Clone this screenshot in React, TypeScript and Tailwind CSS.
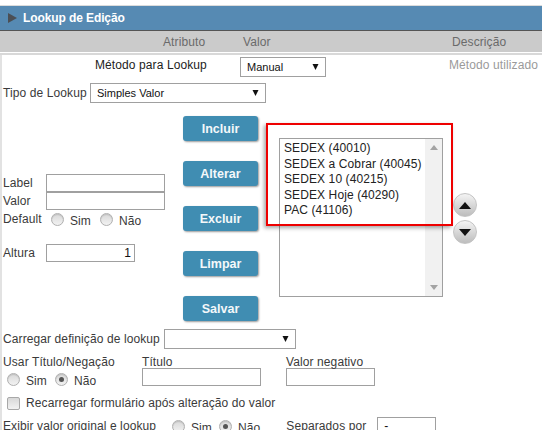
import { ReactNode } from 'react';

const BOX = 'border border-[#a0a0a0] bg-white';

function Arrow() {
    return (
        <svg width="7" height="8" viewBox="0 0 7 8" className="shrink-0">
            <path d="M0.5 1H6.5L3.5 7Z" fill="#111" />
        </svg>
    );
}

function Select({ value, className }: { value?: string; className: string }) {
    return (
        <div className={`${BOX} flex items-center justify-between pl-[6px] pr-[6px] text-[11px] tracking-normal text-[#111] ${className}`}>
            <span>{value}</span>
            <Arrow />
        </div>
    );
}

function Radio({ checked = false }: { checked?: boolean }) {
    return (
        <span className="flex h-[13px] w-[13px] shrink-0 items-center justify-center rounded-full border border-[#b0b0b0] bg-gradient-to-b from-[#d8d8d8] to-[#f2f2f2] shadow-[inset_0_1px_1px_rgba(0,0,0,0.12)]">
            {checked && <span className="h-[5px] w-[5px] rounded-full bg-[#555]" />}
        </span>
    );
}

function RadioLabel({ label, checked }: { label: string; checked?: boolean }) {
    return (
        <span className="flex items-center gap-[6px]">
            <Radio checked={checked} />
            <span className="translate-y-[2px]">{label}</span>
        </span>
    );
}

function ActionButton({ children, className = '' }: { children: ReactNode; className?: string }) {
    return (
        <button
            type="button"
            className={`h-[25px] w-[75px] rounded-[3px] bg-[#408db2] text-[12.5px] font-bold tracking-normal text-[#f4f8fa] shadow-[1px_1px_2px_rgba(0,0,0,0.4)] ${className}`}
        >
            {children}
        </button>
    );
}

function RoundButton({ up = false }: { up?: boolean }) {
    return (
        <button
            type="button"
            className="flex h-[24px] w-[24px] items-center justify-center rounded-full border border-[#c4c4c4] bg-gradient-to-b from-[#f4f4f4] to-[#bdbdbd]"
        >
            <svg width="12" height="7" viewBox="0 0 12 7">
                <path d={up ? 'M0 7H12L6 0Z' : 'M0 0H12L6 7Z'} fill="#111" />
            </svg>
        </button>
    );
}

const ITEMS = ['SEDEX (40010)', 'SEDEX a Cobrar (40045)', 'SEDEX 10 (40215)', 'SEDEX Hoje (40290)', 'PAC (41106)'];

export default function App() {
    return (
        <div className="relative h-[430px] w-[542px] overflow-hidden whitespace-nowrap bg-white font-['Liberation_Sans',Arial,sans-serif] text-[12px] leading-[14px] tracking-[0.1px] text-[#3a3a3a]">
            <div className="pt-[5px]">
                <div className="h-px bg-[#dcdcdc]" />
                <div className="flex h-[24px] items-center bg-[#568ab3] pl-[8px]">
                    <svg width="9" height="10" viewBox="0 0 9 10">
                        <path d="M0 0L9 5L0 10Z" fill="#4b4f55" />
                    </svg>
                    <span className="ml-[6px] font-bold tracking-[-0.1px] text-white">Lookup de Edição</span>
                </div>
                <div className="h-px bg-[#555]" />
                <div className="flex h-[21px] items-center bg-[#cbcbcb] text-[#6a6a6a]">
                    <span className="ml-[163px] w-[80px]">Atributo</span>
                    <span className="w-[209px]">Valor</span>
                    <span>Descrição</span>
                </div>
                <div className="mt-px h-[2px] bg-[#d8d8d8]" />
            </div>

            <div className="border-l-2 border-[#e2e2e2] pl-[1px]">
                <div className="flex h-[20px] items-start pt-[2px]">
                    <span className="ml-[92px] w-[145px] pt-px text-[#222]">Método para Lookup</span>
                    <Select value="Manual" className="h-[20px] w-[86px]" />
                    <span className="ml-[123px] pt-px text-[#9a9a9a]">Método utilizado</span>
                </div>

                <div className="mt-[8px] flex h-[20px] items-center">
                    <span className="w-[87px]">Tipo de Lookup</span>
                    <Select value="Simples Valor" className="h-[20px] w-[176px]" />
                </div>

                <div className="mt-[13px] flex h-[205px]">
                    <div className="w-[180px] pt-[58px]">
                        <div className="flex h-[18px] items-center">
                            <span className="w-[43px]">Label</span>
                            <div className={`${BOX} h-[18px] w-[119px]`} />
                        </div>
                        <div className="flex h-[18px] items-center">
                            <span className="w-[43px]">Valor</span>
                            <div className={`${BOX} h-[18px] w-[119px]`} />
                        </div>
                        <div className="flex h-[18px] items-center">
                            <span className="w-[48px]">Default</span>
                            <RadioLabel label="Sim" />
                            <span className="w-[9px]" />
                            <RadioLabel label="Não" />
                        </div>
                        <div className="mt-[16px] flex h-[18px] items-center">
                            <span className="w-[43px]">Altura</span>
                            <div className={`${BOX} flex h-[18px] w-[89px] items-center justify-end pr-[3px] text-[#111]`}>1</div>
                        </div>
                    </div>

                    <div className="flex w-[96px] flex-col gap-[20px]">
                        <ActionButton>Incluir</ActionButton>
                        <ActionButton>Alterar</ActionButton>
                        <ActionButton>Excluir</ActionButton>
                        <ActionButton>Limpar</ActionButton>
                        <ActionButton>Salvar</ActionButton>
                    </div>

                    <div className={`${BOX} mt-[22px] flex h-[159px] w-[164px]`}>
                        <div className="flex-1 pl-[4px] pt-[2px] text-[#222]">
                            {ITEMS.map((item) => (
                                <div key={item} className="h-[15.5px]">{item}</div>
                            ))}
                        </div>
                        <div className="flex w-[17px] flex-col items-center justify-between bg-[#f1f1f1] py-[6px]">
                            <svg width="8" height="5" viewBox="0 0 8 5"><path d="M0 5H8L4 0Z" fill="#a3a3a3" /></svg>
                            <svg width="8" height="5" viewBox="0 0 8 5"><path d="M0 0H8L4 5Z" fill="#a3a3a3" /></svg>
                        </div>
                    </div>

                    <div className="ml-[10px] flex flex-col gap-[3px] pt-[77px]">
                        <RoundButton up />
                        <RoundButton />
                    </div>
                </div>

                <div className="mt-[8px] flex h-[20px] items-center">
                    <span className="w-[161px]">Carregar definição de lookup</span>
                    <Select className="h-[20px] w-[132px]" />
                </div>

                <div className="mt-[5px] flex">
                    <div className="w-[139px]">
                        <div className="h-[14px] pt-px">Usar Título/Negação</div>
                        <div className="mt-[4px] flex items-center gap-[8px] pl-[4px]">
                            <RadioLabel label="Sim" />
                            <RadioLabel label="Não" checked />
                        </div>
                    </div>
                    <div className="w-[144px]">
                        <div className="h-[14px] pt-px">Título</div>
                        <div className={`${BOX} h-[18px] w-[119px]`} />
                    </div>
                    <div>
                        <div className="h-[14px] pt-px">Valor negativo</div>
                        <div className={`${BOX} h-[18px] w-[89px]`} />
                    </div>
                </div>

                <div className="mt-[10px] flex h-[14px] items-center pl-[4px]">
                    <span className="h-[13px] w-[13px] rounded-[2px] border border-[#a8a8a8] bg-gradient-to-b from-[#d8d8d8] to-[#f2f2f2]" />
                    <span className="ml-[6px]">Recarregar formulário após alteração do valor</span>
                </div>

                <div className="mt-[7px] flex h-[18px] items-center">
                    <span className="w-[169px]">Exibir valor original e lookup</span>
                    <RadioLabel label="Sim" />
                    <span className="w-[7px]" />
                    <RadioLabel label="Não" checked />
                    <span className="ml-[26px] w-[91px]">Separados por</span>
                    <div className={`${BOX} flex h-[18px] w-[59px] items-center pl-[6px] text-[#111]`}>-</div>
                </div>
            </div>

            <div className="pointer-events-none absolute left-[266px] top-[123px] h-[103px] w-[187px] border-2 border-[#ee0000] shadow-[-2px_2px_4px_rgba(0,0,0,0.35)]" />
        </div>
    );
}
